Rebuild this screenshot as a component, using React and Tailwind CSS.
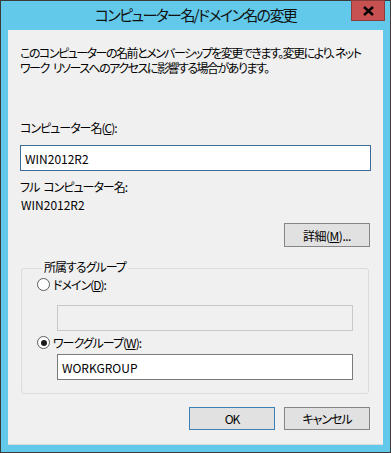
import React from "react";

const font = "font-['Noto_Sans_CJK_JP','Noto_Sans',sans-serif] [font-feature-settings:'palt']";

function Radio({ checked }) {
  return (
    <span className="flex h-[13px] w-[13px] items-center justify-center rounded-full border border-[#5c5c5c] bg-white">
      {checked && <span className="h-[6px] w-[6px] rounded-full bg-[#1a1a1a]" />}
    </span>
  );
}

function Button({ children, primary }) {
  return (
    <button
      className={
        primary
          ? "h-[23px] w-[86px] border border-[#3c7fb1] bg-[#e1e1e1] text-[12px] leading-[15px] text-black"
          : "h-[23px] w-[86px] border border-[#858585] bg-[#e1e1e1] text-[12px] leading-[15px] text-black"
      }
    >
      {children}
    </button>
  );
}

export default function App() {
  return (
    <div className={`flex h-[453px] w-[391px] flex-col border border-[#3b3b3b] bg-[#62c9ea] ${font}`}>
      {/* title bar */}
      <div className="relative flex h-[29px] items-center justify-center">
        <span className="mt-[-2px] whitespace-nowrap text-[15px] leading-[20px] tracking-[-1.6px] text-[#111]">
          コンピューター名/ドメイン名の変更
        </span>
        <div className="absolute right-[5px] top-[-1px] flex h-[21px] w-[34px] items-center justify-center border border-[#8c3c3a] bg-[#c75050]">
          <svg width="11" height="10" viewBox="0 0 11 10">
            <path d="M1 1 L10 9 M10 1 L1 9" stroke="#000" strokeWidth="2.4" />
          </svg>
        </div>
      </div>

      {/* client area */}
      <div className="mx-[7px] flex h-[415px] flex-col border-b border-[#d9d9d9] bg-[#f0f0f0] px-[12px] text-[12px] leading-[15px] tracking-[-1px] text-black">
        <div className="mt-[15px] whitespace-nowrap tracking-[-1.5px]">
          <div className="h-[15px]">このコンピューターの名前とメンバーシップを変更できます。変更により、ネット</div>
          <div className="h-[15px]">
            ワーク<span className="ml-[4px]">リソースへのアクセスに影響する場合があります。</span>
          </div>
        </div>

        <div className="mt-[45px]">
          コンピューター名(<span className="underline">C</span>):
        </div>
        <div className="mt-[10px] flex h-[26px] items-center border border-[#3d6b98] bg-white px-[4px] tracking-normal">
          WIN2012R2
        </div>

        <div className="mt-[8px]">
          フル<span className="ml-[4px]">コンピューター名:</span>
        </div>
        <div className="mt-[3px] pl-[1px] tracking-normal">WIN2012R2</div>

        <div className="mt-[11px] mr-[1px] flex justify-end">
          <button className="h-[24px] w-[86px] border border-[#858585] bg-[#e1e1e1] text-[12px] leading-[15px] tracking-[-0.5px]">
            詳細(<span className="underline">M</span>)...
          </button>
        </div>

        <fieldset className="mt-[12px] ml-[1px] mr-[2px] rounded-[3px] border border-[#dcdcdc] pb-[13px] pl-[15px] pr-[15px]">
          <legend className="ml-[5px] h-[18px] px-[2px]">所属するグループ</legend>
          <div className="flex h-[15px] items-center gap-[3px]">
            <Radio />
            <span>
              ドメイン(<span className="underline">D</span>):
            </span>
          </div>
          <div className="ml-[20px] mt-[13px] h-[26px] border border-[#c8c8c8] bg-[#f0f0f0]" />
          <div className="mt-[4px] flex h-[15px] items-center gap-[3px]">
            <Radio checked />
            <span>
              ワークグループ(<span className="underline">W</span>):
            </span>
          </div>
          <div className="ml-[20px] mt-[4px] flex h-[26px] items-center border border-[#7a7a7a] bg-white px-[4px] tracking-normal">
            WORKGROUP
          </div>
        </fieldset>

        <div className="mt-[13px] mr-[1px] flex justify-end gap-[9px]">
          <Button primary>OK</Button>
          <Button>キャンセル</Button>
        </div>
      </div>
    </div>
  );
}
